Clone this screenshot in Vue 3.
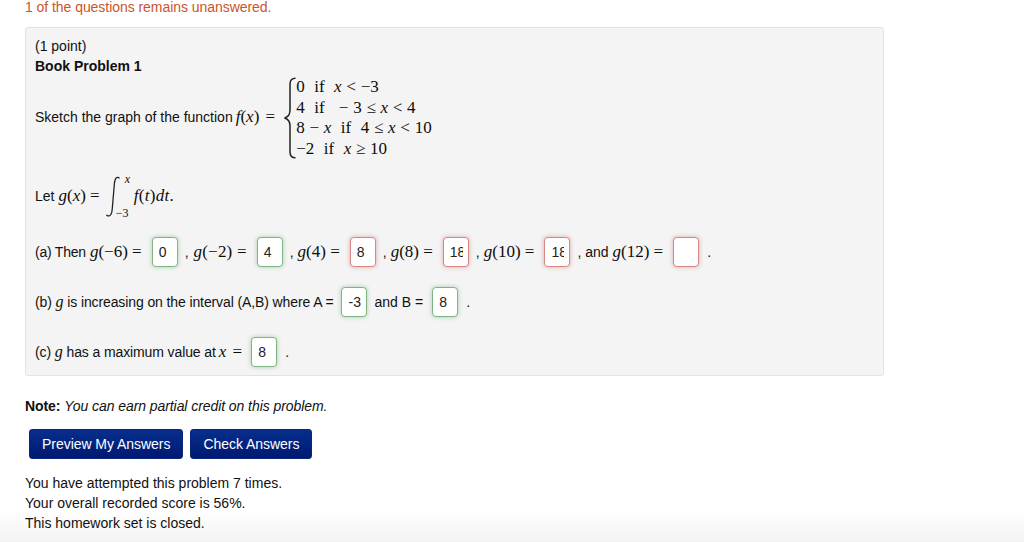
<template>
  <div class="page">
    <div class="warning">1 of the questions remains unanswered.</div>

    <div class="well">
      <div class="line">(1 point)</div>
      <div class="line"><b>Book Problem 1</b></div>

      <div class="sketch">
        <span class="lift">Sketch the graph of the function</span>
        <span class="math fx lift"><i>f</i>(<i>x</i>) <span class="eq">=</span></span>
        <svg class="brace" width="15" height="82" viewBox="0 0 15 82">
          <path d="M13.5 1.2C9.5 1.2 8 3 8 7V33C8 37.5 6.5 40 2.5 41C6.5 42 8 44.5 8 49V75C8 79 9.5 80.8 13.5 80.8" fill="none" stroke="#222" stroke-width="1.5" />
        </svg>
        <div class="cases math">
          <div>0&nbsp; if&nbsp; <i>x</i> &lt; −3</div>
          <div>4&nbsp; if&nbsp; &nbsp;− 3 ≤ <i>x</i> &lt; 4</div>
          <div>8 − <i>x</i>&nbsp; if&nbsp; 4 ≤ <i>x</i> &lt; 10</div>
          <div>−2&nbsp; if&nbsp; <i>x</i> ≥ 10</div>
        </div>
      </div>

      <div class="letg">
        <span>Let</span>
        <span class="math gx"><i>g</i>(<i>x</i>) =</span>
        <svg class="int-sign" width="16" height="41" viewBox="0 0 16 44" preserveAspectRatio="none">
          <path d="M14.5 2.6C13.8 1.4 12.4 1.1 11.4 1.9C10.2 2.9 9.7 5 9.4 8L7.2 36C6.9 39.5 6.2 41.8 4.6 42.6C3.4 43.2 2 42.8 1.5 41.6" fill="none" stroke="#222" stroke-width="1.3" />
        </svg>
        <span class="limits math">
          <i class="upper">x</i>
          <span>−3</span>
        </span>
        <span class="math integrand"><i>f</i>(<i>t</i>)<i>dt</i>.</span>
      </div>

      <div class="answers part-a">
        <span class="then">(a) Then</span>
        <span class="math"><i>g</i>(−6) =</span>
        <span class="box ok"><span>0</span></span>
        <span class="sep">,</span>
        <span class="math wide"><i>g</i>(−2) =</span>
        <span class="box ok"><span>4</span></span>
        <span class="sep">,</span>
        <span class="math"><i>g</i>(4) =</span>
        <span class="box bad"><span>8</span></span>
        <span class="sep">,</span>
        <span class="math"><i>g</i>(8) =</span>
        <span class="box bad"><span>18</span></span>
        <span class="sep">,</span>
        <span class="math"><i>g</i>(10) =</span>
        <span class="box bad"><span>18</span></span>
        <span class="sep">, and</span>
        <span class="math"><i>g</i>(12) =</span>
        <span class="box bad"><span></span></span>
        <span class="dot">.</span>
      </div>

      <div class="answers part-b">
        <span class="tight">(b) <i class="math">g</i> is increasing on the interval (A,B) where A =</span>
        <span class="box ok"><span>-3</span></span>
        <span class="and-b">and B =</span>
        <span class="box ok"><span>8</span></span>
        <span class="dot">.</span>
      </div>

      <div class="answers part-c">
        <span class="tight">(c) <i class="math">g</i> has a maximum value at</span>
        <span class="math xeq"><i>x</i> <span class="eq">=</span></span>
        <span class="box ok"><span>8</span></span>
        <span class="dot">.</span>
      </div>
    </div>

    <div class="note"><b>Note:</b> <i>You can earn partial credit on this problem.</i></div>

    <div class="buttons">
      <button class="btn">Preview My Answers</button>
      <button class="btn">Check Answers</button>
    </div>

    <div class="status">
      <div>You have attempted this problem 7 times.</div>
      <div>Your overall recorded score is 56%.</div>
      <div>This homework set is closed.</div>
    </div>
  </div>
</template>

<script setup>
</script>

<style scoped>
.page {
  box-sizing: border-box;
  height: 542px;
  overflow: hidden;
  padding-left: 25px;
  font-family: "Liberation Sans", Arial, sans-serif;
  font-size: 14px;
  line-height: 20px;
  color: #111;
  background: linear-gradient(to bottom, #fff 510px, #f3f3f3 542px);
}
.warning {
  height: 14px;
  line-height: 14px;
  margin-bottom: 13px;
  color: #c9552b;
  letter-spacing: -0.05px;
}
.well {
  box-sizing: border-box;
  width: 859px;
  height: 349px;
  padding: 8px 9px 0;
  background: #f4f4f4;
  border: 1px solid #e3e3e3;
  border-radius: 3px;
}
.line {
  height: 20px;
}
.math {
  font-family: "Liberation Serif", "Times New Roman", serif;
  font-size: 17px;
  color: #0c0c0c;
}
.eq {
  margin-left: 2px;
}
.lift {
  margin-bottom: 2px;
}
.sketch {
  display: flex;
  align-items: center;
  height: 82px;
  margin-top: 1px;
}
.fx {
  margin-left: 3px;
  margin-right: 7px;
}
.brace {
  flex: none;
  margin-right: -1px;
}
.cases {
  line-height: 20.5px;
  word-spacing: 0.5px;
}
.letg {
  display: flex;
  align-items: center;
  height: 46px;
  margin-top: 14px;
}
.gx {
  margin-left: 4px;
}
.int-sign {
  flex: none;
  margin-left: 5px;
}
.limits {
  display: flex;
  flex-direction: column;
  justify-content: space-between;
  height: 46px;
  width: 18px;
  margin-left: -5px;
  font-size: 12px;
  line-height: 12px;
}
.upper {
  padding-left: 9px;
}
.integrand {
  letter-spacing: 0.3px;
}
.answers {
  display: flex;
  align-items: center;
  height: 30px;
  margin-top: 20px;
}
.part-a {
  margin-top: 18px;
}
.part-a > .math {
  margin-left: 4px;
}
.part-a > .wide {
  margin-left: 5px;
  letter-spacing: 0.2px;
}
.part-a > .box {
  margin-left: 10px;
}
.then {
  letter-spacing: -0.22px;
}
.box {
  box-sizing: border-box;
  flex: none;
  width: 26px;
  height: 30px;
  margin: 0 7px 0 8px;
  padding: 0 5px;
  background: #fff;
  border: 1px solid #ccc;
  border-radius: 4px;
  line-height: 28px;
  color: #222;
}
.box span {
  display: block;
  width: 14px;
  height: 28px;
  padding-left: 1px;
  overflow: hidden;
  white-space: nowrap;
  box-sizing: border-box;
}
.ok {
  border-color: #7eb583;
  box-shadow: 0 0 4px rgba(90, 170, 100, 0.5);
}
.bad {
  border-color: #d98686;
  box-shadow: 0 0 4px rgba(205, 90, 90, 0.5);
}
.tight {
  letter-spacing: -0.11px;
}
.tight .math {
  font-size: 16px;
}
.and-b {
  margin-right: 1px;
}
.xeq {
  margin-left: 3px;
  margin-right: 1px;
}
.dot {
  margin-left: 1px;
}
.note {
  margin-top: 20px;
  letter-spacing: -0.07px;
}
.buttons {
  display: flex;
  gap: 7px;
  margin-top: 13px;
  margin-left: 4px;
}
.btn {
  height: 30px;
  padding: 0 12px;
  border: 1px solid #08267a;
  border-radius: 3px;
  background: linear-gradient(to bottom, #062f8c, #001872);
  color: #fff;
  font-family: "Liberation Sans", Arial, sans-serif;
  font-size: 14px;
  letter-spacing: -0.04px;
}
.status {
  margin-top: 14px;
}
</style>

<style>
html,
body {
  margin: 0;
  background: #fff;
}
</style>
